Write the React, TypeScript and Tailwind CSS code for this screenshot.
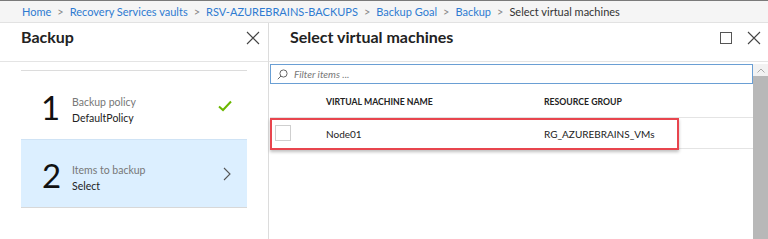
import React from 'react'

const font = { fontFamily: 'Lato, "Noto Sans", sans-serif' }

function Crumb({ label, last }: { label: string; last?: boolean }) {
  return (
    <>
      <span className={last ? 'text-[#333]' : 'text-[#2e7bd1]'}>{label}</span>
      {!last && <span className="mx-[6px] text-[#888]">&gt;</span>}
    </>
  )
}

function CloseIcon({ size = 14 }: { size?: number }) {
  return (
    <svg width={size} height={size} viewBox="0 0 14 14" fill="none" stroke="#444" strokeWidth="1.1">
      <path d="M1 1 L13 13 M13 1 L1 13" />
    </svg>
  )
}

export default function App() {
  const crumbs = ['Home', 'Recovery Services vaults', 'RSV-AZUREBRAINS-BACKUPS', 'Backup Goal', 'Backup', 'Select virtual machines']

  return (
    <div className="w-[768px] h-[239px] overflow-hidden bg-white text-[#222]" style={font}>
      {/* breadcrumb */}
      <div className="h-[23px] bg-[#f5f5f5] border-t border-[#7a7a7a] border-b border-b-[#e2e2e2] flex items-center pl-[22px] text-[11px] leading-none">
        {crumbs.map((c, i) => (
          <Crumb key={c} label={c} last={i === crumbs.length - 1} />
        ))}
      </div>

      <div className="flex h-[216px]">
        {/* Backup blade */}
        <aside className="w-[269px] border-r border-[#dcdcdc] shrink-0">
          <div className="h-[39px] border-b border-[#e4e4e4] flex items-start justify-between pt-[2px] pl-[21px] pr-[8px]">
            <div className="text-[16px] leading-[24px] font-bold">Backup</div>
            <div className="pt-[6px]">
              <CloseIcon />
            </div>
          </div>
          <div className="px-[21px] pt-[8px]">
            <div className="border-t border-[#dcdcdc]" />
            <div className="h-[68px] flex items-center pt-[9px]">
              <div className="w-[51px] pl-[20px] -mt-[4px] text-[33px] leading-none text-[#111]">1</div>
              <div className="flex-1 text-[10.5px] leading-[16px]">
                <div className="text-[#777]">Backup policy</div>
                <div className="text-[#222]">DefaultPolicy</div>
              </div>
              <svg width="14" height="12" viewBox="0 0 14 12" className="mr-[15px] -mt-[7px]" fill="none" stroke="#6bb700" strokeWidth="2">
                <path d="M1 6.5 L5 10 L13 1.5" />
              </svg>
            </div>
            <div className="h-[69px] bg-[#dcefff] border-t border-[#cfe3f5] border-b border-b-[#d8d8d8] flex items-center pt-[9px]">
              <div className="w-[51px] pl-[21px] -mt-[5px] text-[33px] leading-none text-[#111]">2</div>
              <div className="flex-1 text-[10.5px] leading-[16px]">
                <div className="text-[#777]">Items to backup</div>
                <div className="text-[#222]">Select</div>
              </div>
              <svg width="8" height="14" viewBox="0 0 8 14" className="mr-[16px] -mt-[9px]" fill="none" stroke="#555" strokeWidth="1.1">
                <path d="M1 1 L7 7 L1 13" />
              </svg>
            </div>
          </div>
        </aside>

        {/* Select virtual machines blade */}
        <section className="flex-1 flex flex-col">
          <div className="h-[39px] border-b border-[#e4e4e4] flex items-start justify-between pt-[2px] pl-[21px] pr-[7px]">
            <div className="text-[16px] leading-[24px] font-bold">Select virtual machines</div>
            <div className="flex items-center gap-[15px] pt-[6px]">
              <div className="w-[12px] h-[12px] border border-[#555]" />
              <CloseIcon />
            </div>
          </div>
          <div className="flex flex-1">
            <div className="flex-1 pt-[2px] pl-[1px]">
              <div className="h-[20px] border border-[#6a9fd4] flex items-center pl-[6px] gap-[6px]">
                <svg width="11" height="11" viewBox="0 0 11 11" fill="none" stroke="#666" strokeWidth="1">
                  <circle cx="6.5" cy="4.5" r="3.6" />
                  <path d="M4 7 L0.8 10.2" />
                </svg>
                <span className="text-[10px] italic text-[#777]">Filter items ...</span>
              </div>
              <div className="h-[33px] flex items-center pt-[2px] text-[8.7px] font-bold text-[#222]">
                <div className="w-[56px]" />
                <div className="w-[218px]">VIRTUAL MACHINE NAME</div>
                <div>RESOURCE GROUP</div>
              </div>
              <div className="relative h-[32px] border-t border-[#e4e4e4] border-b border-b-[#e4e4e4] flex items-center pt-[3px] text-[10px]">
                <div className="w-[56px] pl-[5px] -mt-[3px]">
                  <div className="w-[16px] h-[16px] border border-[#cfcfcf]" />
                </div>
                <div className="w-[218px]">Node01</div>
                <div>RG_AZUREBRAINS_VMs</div>
                <div className="absolute left-0 top-0 w-[409px] h-[32px] border-2 border-[#e8454e] shadow-[0_2px_3px_rgba(0,0,0,0.25)]" />
              </div>
            </div>
            <div className="w-[15px] flex flex-col pt-[2px]">
              <div className="h-[12px] bg-[#f2f2f2] flex items-center justify-center">
                <svg width="8" height="5" viewBox="0 0 8 5" fill="none" stroke="#aaa" strokeWidth="1">
                  <path d="M0.5 4.5 L4 1 L7.5 4.5" />
                </svg>
              </div>
              <div className="flex-1 bg-[#b8b8b8]" />
            </div>
          </div>
        </section>
      </div>
    </div>
  )
}
